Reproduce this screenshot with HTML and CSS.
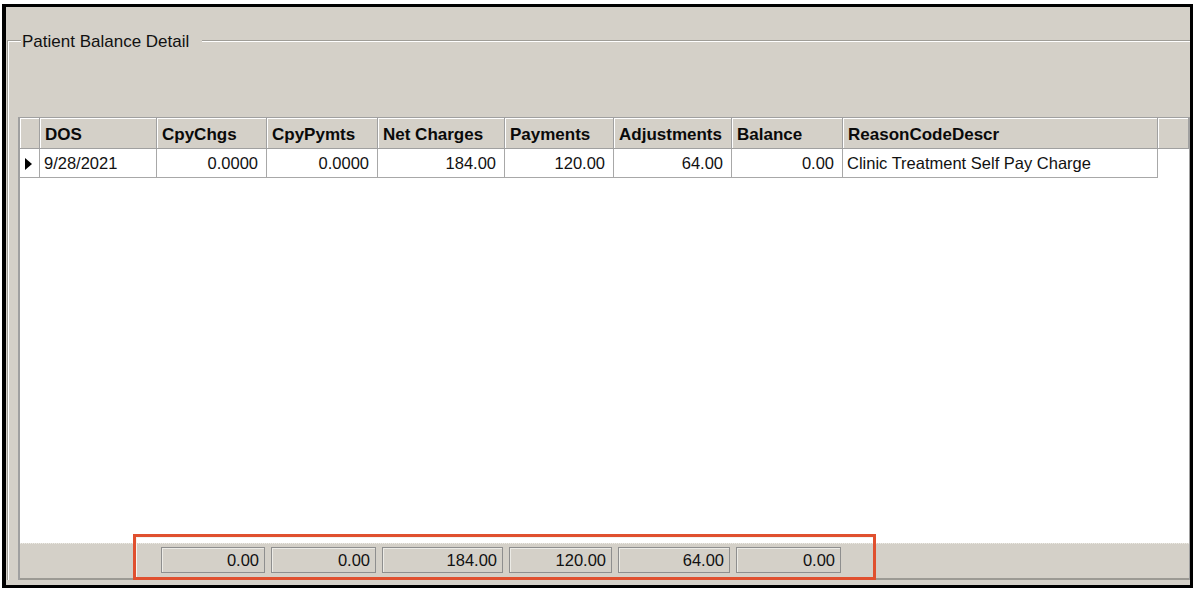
FILE: index.html
```html
<!DOCTYPE html>
<html lang="en">
<head>
<meta charset="utf-8">
<title>Patient Balance Detail</title>
<link rel="stylesheet" href="styles.css">
</head>
<body>
<div class="window">
  <div class="group">
    <div class="group-title"><span class="group-label">Patient Balance Detail</span></div>
    <div class="group-body">
      <div class="grid">
        <div class="row head">
          <div class="cell rh"></div>
          <div class="cell">DOS</div>
          <div class="cell">CpyChgs</div>
          <div class="cell">CpyPymts</div>
          <div class="cell">Net Charges</div>
          <div class="cell">Payments</div>
          <div class="cell">Adjustments</div>
          <div class="cell">Balance</div>
          <div class="cell">ReasonCodeDescr</div>
          <div class="cell"></div>
        </div>
        <div class="row data">
          <div class="cell rh"><svg class="arrow" width="7" height="12" viewBox="0 0 7 12"><polygon points="0,0 7,6 0,12" fill="#000"/></svg></div>
          <div class="cell">9/28/2021</div>
          <div class="cell num">0.0000</div>
          <div class="cell num">0.0000</div>
          <div class="cell num">184.00</div>
          <div class="cell num">120.00</div>
          <div class="cell num">64.00</div>
          <div class="cell num">0.00</div>
          <div class="cell">Clinic Treatment Self Pay Charge</div>
          <div class="cell blank"></div>
        </div>
        <div class="empty"></div>
        <div class="row foot">
          <div></div>
          <div></div>
          <div class="tot"><span class="box">0.00</span></div>
          <div class="tot"><span class="box">0.00</span></div>
          <div class="tot"><span class="box">184.00</span></div>
          <div class="tot"><span class="box">120.00</span></div>
          <div class="tot"><span class="box">64.00</span></div>
          <div class="tot"><span class="box">0.00</span></div>
          <div></div>
          <div></div>
        </div>
        <div class="annot"></div>
      </div>
    </div>
  </div>
</div>
</body>
</html>
```

FILE: styles.css
```css
html, body {
  margin: 0;
  padding: 0;
  background: #fff;
}

body {
  font-family: "Liberation Sans", Arial, sans-serif;
  color: #000;
}

.window {
  margin: 4px 0 0 2px;
  width: 1184px;
  border: 3px solid #000;
  border-left-width: 4px;
  background: #d4d0c8;
  padding-bottom: 5px;
  overflow: hidden;
}

.group {
  margin: 23px 0 0 1px;
}

.group-title {
  display: flex;
  height: 22px;
}

.group-title::before {
  content: "";
  width: 14px;
  margin-top: 10px;
  border-top: 1px solid #a09e98;
  border-left: 1px solid #a09e98;
  box-shadow: inset 1px 1px 0 #fff;
  box-sizing: border-box;
}

.group-title::after {
  content: "";
  flex: 1;
  align-self: flex-start;
  margin-top: 10px;
  height: 0;
  border-top: 1px solid #a09e98;
  border-bottom: 1px solid #fff;
}

.group-label {
  font-size: 17px;
  line-height: 20px;
  padding: 2px 13px 0 1px;
  color: #111;
  white-space: nowrap;
}

.group-body {
  border-left: 1px solid #a09e98;
  box-shadow: inset 1px 0 0 #fff;
  padding-top: 65px;
}

.grid {
  position: relative;
  margin-left: 10px;
  height: 463px;
  box-sizing: border-box;
  border-top: 1px solid #a0a0a0;
  border-left: 2px solid #a0a0a0;
  border-right: 1px solid #a0a0a0;
  background: #fff;
  display: flex;
  flex-direction: column;
}

.row {
  display: grid;
  grid-template-columns: 20px 117px 110px 111px 127px 109px 118px 111px 315px 1fr;
}

.cell {
  box-sizing: border-box;
  white-space: nowrap;
  overflow: hidden;
}

.head .cell {
  height: 31px;
  background: #d4d0c8;
  border-right: 1px solid #a0a0a0;
  border-bottom: 1px solid #a0a0a0;
  box-shadow: inset 1px 1px 0 #fff;
  padding: 3px 4px 0 5px;
  font-size: 17px;
  font-weight: bold;
  line-height: 27px;
  color: #0a0a0a;
}

.data .cell {
  height: 29px;
  border-right: 1px solid #a8a8a8;
  border-bottom: 1px solid #a8a8a8;
  padding: 0 8px 0 4px;
  font-size: 16.5px;
  line-height: 28px;
  color: #111;
}

.data .num {
  text-align: right;
}

.data .rh {
  display: flex;
  align-items: center;
  padding: 2px 0 0 5px;
}

.data .blank {
  border: none;
}

.arrow {
  display: block;
}

.empty {
  flex: 1;
}

.foot {
  height: 37px;
  box-sizing: border-box;
  background: #d4d0c8;
  border-top: 1px dotted #eceae4;
  border-bottom: 2px solid #9c9a94;
  padding-top: 3px;
}

.tot {
  display: flex;
}

.box {
  flex: 1;
  margin: 0 2px 0 4px;
  height: 26px;
  box-sizing: border-box;
  border: 1px solid #8e8e8e;
  box-shadow: inset 1px 1px 0 #ecebe6;
  text-align: right;
  padding-right: 5px;
  font-size: 16.5px;
  line-height: 24px;
  color: #111;
}

.annot {
  position: absolute;
  left: 113px;
  top: 416px;
  width: 743px;
  height: 46px;
  box-sizing: border-box;
  border: 3px solid #e0502f;
  box-shadow: inset 1px 1px 0 #f6f4ef;
  pointer-events: none;
}
```
